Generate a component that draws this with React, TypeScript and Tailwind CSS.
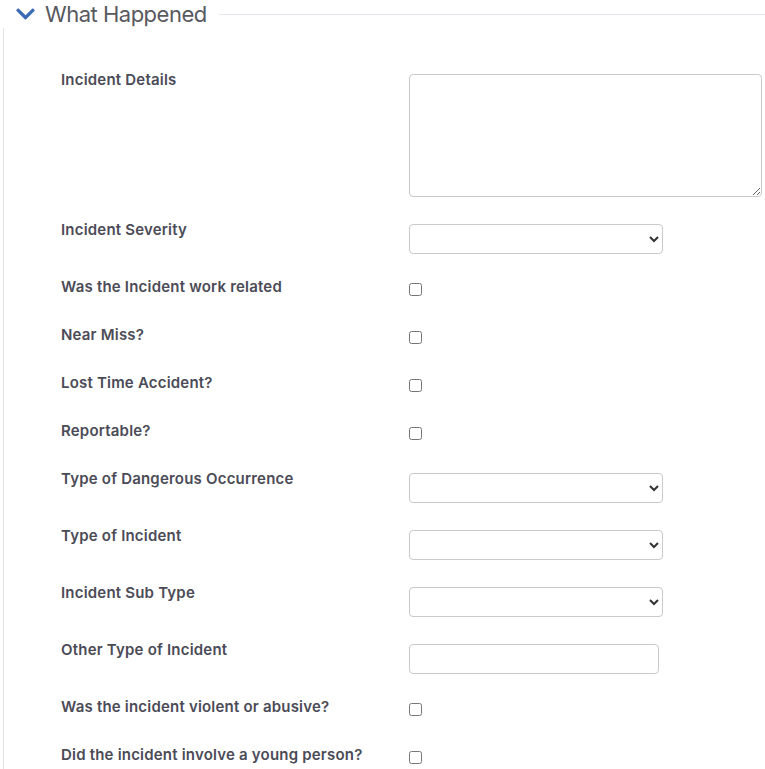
type Field =
  | { label: string; kind: 'textarea' }
  | { label: string; kind: 'select' }
  | { label: string; kind: 'checkbox' }
  | { label: string; kind: 'text' };

const FIELDS: Field[] = [
  { label: 'Incident Details', kind: 'textarea' },
  { label: 'Incident Severity', kind: 'select' },
  { label: 'Was the Incident work related', kind: 'checkbox' },
  { label: 'Near Miss?', kind: 'checkbox' },
  { label: 'Lost Time Accident?', kind: 'checkbox' },
  { label: 'Reportable?', kind: 'checkbox' },
  { label: 'Type of Dangerous Occurrence', kind: 'select' },
  { label: 'Type of Incident', kind: 'select' },
  { label: 'Incident Sub Type', kind: 'select' },
  { label: 'Other Type of Incident', kind: 'text' },
  { label: 'Was the incident violent or abusive?', kind: 'checkbox' },
  { label: 'Did the incident involve a young person?', kind: 'checkbox' },
];

function Control({ field }: { field: Field }) {
  switch (field.kind) {
    case 'textarea':
      return <textarea className="block w-[353px] h-[123px] bg-white border border-[#cacaca] rounded-[4px]" />;
    case 'select':
      return (
        <select className="block w-[254px] h-[30px] bg-white border border-[#cacaca] rounded-[4px] text-[#333]">
          <option value=""></option>
        </select>
      );
    case 'text':
      return <input type="text" className="block w-[250px] h-[30px] bg-white border border-[#cacaca] rounded-[4px]" />;
    default:
      return (
        <div className="h-[21px] pt-[2px]">
          <input type="checkbox" className="block w-[13px] h-[13px]" />
        </div>
      );
  }
}

export default function App() {
  return (
    <div className="w-[765px] min-h-[769px] bg-white font-['Inter',sans-serif] overflow-hidden">
      {/* 섹션 헤더 */}
      <div className="flex items-center h-[28px] pl-[16px]">
        <svg viewBox="0 0 448 512" className="w-[19px] h-[22px] fill-[#3b6bb5]">
          <path d="M207.029 381.476L12.686 187.132c-9.373-9.373-9.373-24.569 0-33.941l22.667-22.667c9.357-9.357 24.522-9.375 33.901-.04L224 284.505l154.745-154.021c9.379-9.335 24.544-9.317 33.901.04l22.667 22.667c9.373 9.373 9.373 24.569 0 33.941L240.971 381.476c-9.373 9.372-24.569 9.372-33.942 0z" />
        </svg>
        <span className="ml-[10px] text-[22px] leading-none text-[#58595e] font-normal tracking-[-0.5px]">What Happened</span>
        <div className="flex-1 ml-[12px] h-px bg-[#e6e6ee]" />
      </div>

      {/* 폼 본문 */}
      <div className="ml-[3px] border-l border-[#e4e4e8] pl-[57px] pt-[46px]">
        {FIELDS.map((field) => (
          <div key={field.label} className="flex items-start mb-[27px]">
            <label className="w-[348px] shrink-0 -mt-[4px] text-[15px] leading-[20px] font-semibold tracking-[0.2px] text-[#4b4b57]">
              {field.label}
            </label>
            <Control field={field} />
          </div>
        ))}
      </div>
    </div>
  );
}
